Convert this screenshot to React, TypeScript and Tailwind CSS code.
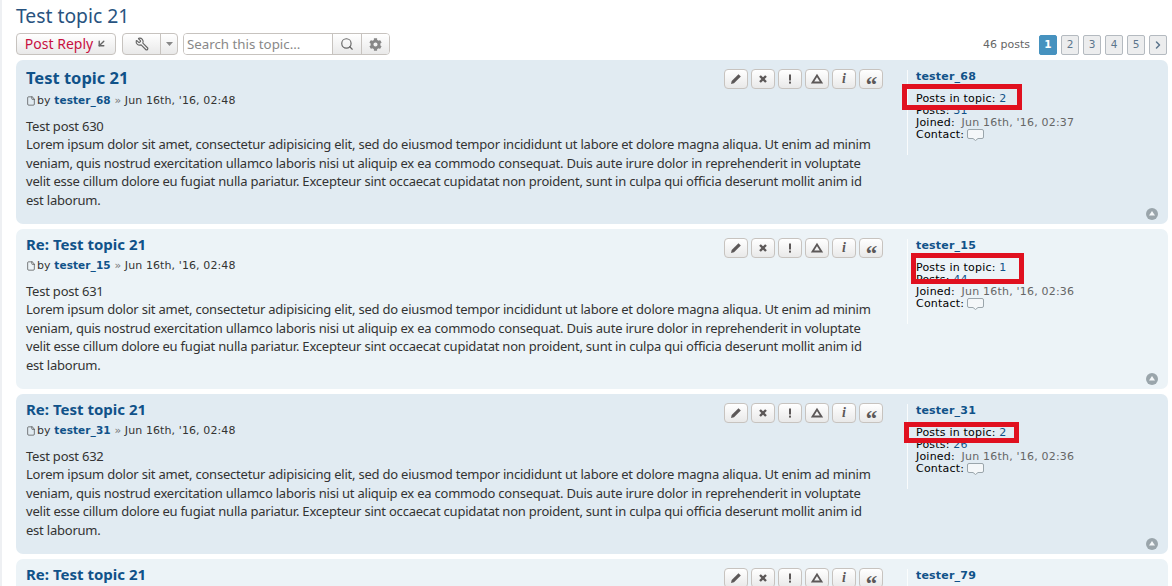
import React from 'react';
import { ArrowDownLeft, Search, Wrench, ChevronRight, File } from 'lucide-react';
import { FaCog } from 'react-icons/fa';

const body = '[font-family:"Noto_Sans",sans-serif]';
const verdana = '[font-family:"DejaVu_Sans",sans-serif]';

const posts = [
  { title: 'Test topic 21', author: 'tester_68', n: 630, inTopic: 2, count: 31, joined: "Jun 16th, '16, 02:37", first: true },
  { title: 'Re: Test topic 21', author: 'tester_15', n: 631, inTopic: 1, count: 44, joined: "Jun 16th, '16, 02:36" },
  { title: 'Re: Test topic 21', author: 'tester_31', n: 632, inTopic: 2, count: 26, joined: "Jun 16th, '16, 02:36" },
  { title: 'Re: Test topic 21', author: 'tester_79', n: 633, inTopic: 3, count: 30, joined: "Jun 16th, '16, 02:37" },
];

const lines = [
  'Lorem ipsum dolor sit amet, consectetur adipisicing elit, sed do eiusmod tempor incididunt ut labore et dolore magna aliqua. Ut enim ad minim',
  'veniam, quis nostrud exercitation ullamco laboris nisi ut aliquip ex ea commodo consequat. Duis aute irure dolor in reprehenderit in voluptate',
  'velit esse cillum dolore eu fugiat nulla pariatur. Excepteur sint occaecat cupidatat non proident, sunt in culpa qui officia deserunt mollit anim id',
  'est laborum.',
];

const btn = 'border border-[#c7c3bf] rounded-[4px] bg-gradient-to-b from-white to-[#e9e9e9] flex items-center justify-center';

function PostIcon({ i }: { i: number }) {
  const c = '#5c5858';
  if (i === 0) return <svg width="14" height="14" viewBox="0 0 14 14"><path d="M2 12l.7-3L9.500 2.200l2.300 2.300L5 11.300z" fill={c} /></svg>;
  if (i === 1) return <svg width="12" height="12" viewBox="0 0 12 12"><path d="M3 3l6 6M9 3l-6 6" stroke={c} strokeWidth="2.400" /></svg>;
  if (i === 2) return <svg width="12" height="12" viewBox="0 0 12 12"><path d="M6 1.500v6" stroke={c} strokeWidth="2" /><rect x="5" y="8.600" width="2" height="2" fill={c} /></svg>;
  if (i === 3) return <svg width="14" height="12" viewBox="0 0 14 12"><path d="M7 2.500L11.500 9.500H2.500z" fill="none" stroke={c} strokeWidth="1.800" /></svg>;
  if (i === 4) return <span className="[font-family:'Liberation_Serif',serif] italic font-bold text-[14px] leading-none text-[#5c5858]">i</span>;
  return <span className="[font-family:'Liberation_Serif',serif] font-bold text-[23px] leading-none text-[#5c5858] h-[12px] tracking-[-1px]">“</span>;
}

function Post({ p, alt, highlight }: { p: (typeof posts)[number]; alt: boolean; highlight: string }) {
  return (
    <div className={`relative flex rounded-[7px] pl-[10px] shrink-0 ${alt ? 'bg-[#ecf3f7]' : 'bg-[#e1ebf2]'} ${p.first ? 'h-[164px]' : 'h-[160px]'}`}>
      <div className="w-[856px] shrink-0">
        <h3 className={`${body} font-bold text-[#105289] leading-[22px] ${p.first ? 'text-[16.500px] pt-[7px] h-[29px]' : 'text-[15px] pt-[4px] h-[26px]'}`}>{p.title}</h3>
        <div className={`${verdana} flex items-center text-[11px] tracking-[0.1px] leading-[14px] text-[#333] ${p.first ? 'mt-[4px]' : 'mt-[3px]'}`}>
          <File size={10} strokeWidth={1.500} className="mr-[1px]" />
          <span>by <b className="text-[#105289] text-[10.500px]">{p.author}</b> <span className="text-[#777]">»</span> Jun 16th, &#39;16, 02:48</span>
        </div>
        <div className={`${body} text-[13px] tracking-[-0.22px] leading-[18.400px] text-[#333] whitespace-nowrap mt-[9px]`}>
          <p>Test post {p.n}</p>
          {lines.map((l) => <p key={l}>{l}</p>)}
        </div>
      </div>
      <div className="flex gap-[3px] -ml-[158px] w-[160px] h-[20px] shrink-0 mt-[9px]">
        {[0, 1, 2, 3, 4, 5].map((i) => (
          <div key={i} className={`${btn} w-[24px] h-[20px] shrink-0`}><PostIcon i={i} /></div>
        ))}
      </div>
      <div className={`${verdana} ml-[23px] mt-[10px] h-[85px] border-l border-white/80 pl-[8px] text-[11px] tracking-[0.2px] leading-[12px] text-[#000] relative whitespace-nowrap`}>
        <div className="font-bold text-[#105289] leading-[14px]">{p.author}</div>
        <div className="mt-[9px]">Posts in topic: <span className="text-[#105289]">{p.inTopic}</span></div>
        <div>Posts: <span className="text-[#105289]">{p.count}</span></div>
        <div>Joined: <span className="text-[#666] ml-[3px]">{p.joined}</span></div>
        <div className="flex items-center">Contact:
          <svg className="ml-[3px]" width="17" height="12" viewBox="0 0 17 12"><path d="M2 .5h13a1.500 1.500 0 0 1 1.500 1.500v6a1.500 1.500 0 0 1-1.500 1.500h-4L8.500 11.500 6 9.500H2A1.500 1.500 0 0 1 .5 8V2A1.500 1.500 0 0 1 2 .5z" fill="#f4f7f9" stroke="#9aa5ab" /></svg>
        </div>
        {highlight && <div className={`absolute border-[5px] border-[#e0101f] ${highlight}`} />}
      </div>
      <svg className="absolute right-[10px] bottom-[4px]" width="12" height="12" viewBox="0 0 12 12"><circle cx="6" cy="6" r="6" fill="#9aa5ab" /><path d="M6 3l3 4.500H3z" fill="#f4f7f9" /></svg>
    </div>
  );
}

export default function App() {
  return (
    <div className="h-[586px] w-[1172px] overflow-hidden bg-white border-l-2 border-[#eef0f3] pl-[14px] pr-[4px]">
      <h2 className={`${body} text-[19.300px] leading-[24px] text-[#28537f] pt-[4px] h-[33px]`}>Test topic 21</h2>
      <div className="flex items-start h-[27px]">
        <div className={`${btn} ${body} w-[100px] h-[22px] gap-[3px] text-[14px] leading-[18px] pb-[1px] text-[#c8103f]`}>
          Post Reply <ArrowDownLeft size={11} strokeWidth={3} className="text-[#666]" />
        </div>
        <div className={`${btn} ml-[6px] w-[56px] h-[22px]`}>
          <div className="w-[38px] h-full flex items-center justify-center border-r border-[#c7c3bf]"><Wrench size={14} className="text-[#666] -scale-x-100" /></div>
          <div className="flex-1 flex items-center justify-center">
            <svg width="7" height="4" viewBox="0 0 7 4"><path d="M0 0h7L3.500 4z" fill="#888" /></svg>
          </div>
        </div>
        <div className="ml-[5px] flex h-[22px] w-[207px] border border-[#c7c3bf] rounded-[4px] overflow-hidden">
          <div className={`${body} w-[149px] bg-white border-r border-[#c7c3bf] text-[13.300px] text-[#888] pl-[3px] leading-[20px]`}>Search this topic...</div>
          <div className="w-[29px] bg-gradient-to-b from-white to-[#e9e9e9] border-r border-[#c7c3bf] flex items-center justify-center"><Search size={14} className="text-[#666]" /></div>
          <div className="flex-1 bg-gradient-to-b from-white to-[#e9e9e9] flex items-center justify-center"><FaCog size={13} className="text-[#888]" /></div>
        </div>
        <div className={`${verdana} ml-auto text-[11px] text-[#666] mr-[9px] mt-[4px]`}>46 posts</div>
        <div className={`${verdana} flex gap-[4px] text-[10.500px] text-[#5c758c] mr-[1px] mt-[2px]`}>
          <div className="w-[18px] h-[20px] rounded-[2px] bg-[#4692bf] text-white font-bold flex items-center justify-center border border-[#4692bf]">1</div>
          {[2, 3, 4, 5].map((n) => (
            <div key={n} className="w-[18px] h-[20px] rounded-[2px] border border-[#b4bac0] bg-[#ecedee] flex items-center justify-center">{n}</div>
          ))}
          <div className="w-[18px] h-[20px] rounded-[2px] border border-[#b4bac0] bg-[#ecedee] flex items-center justify-center"><ChevronRight size={12} strokeWidth={3} /></div>
        </div>
      </div>
      <div className="flex flex-col gap-[5px]">
        <Post p={posts[0]} alt={false} highlight="left-[-6px] top-[14px] w-[120px] h-[26px]" />
        <Post p={posts[1]} alt highlight="left-[3px] top-[14px] w-[113px] h-[31px]" />
        <Post p={posts[2]} alt={false} highlight="left-[-4px] top-[18px] w-[115px] h-[21px]" />
        <Post p={posts[3]} alt highlight="" />
      </div>
    </div>
  );
}
